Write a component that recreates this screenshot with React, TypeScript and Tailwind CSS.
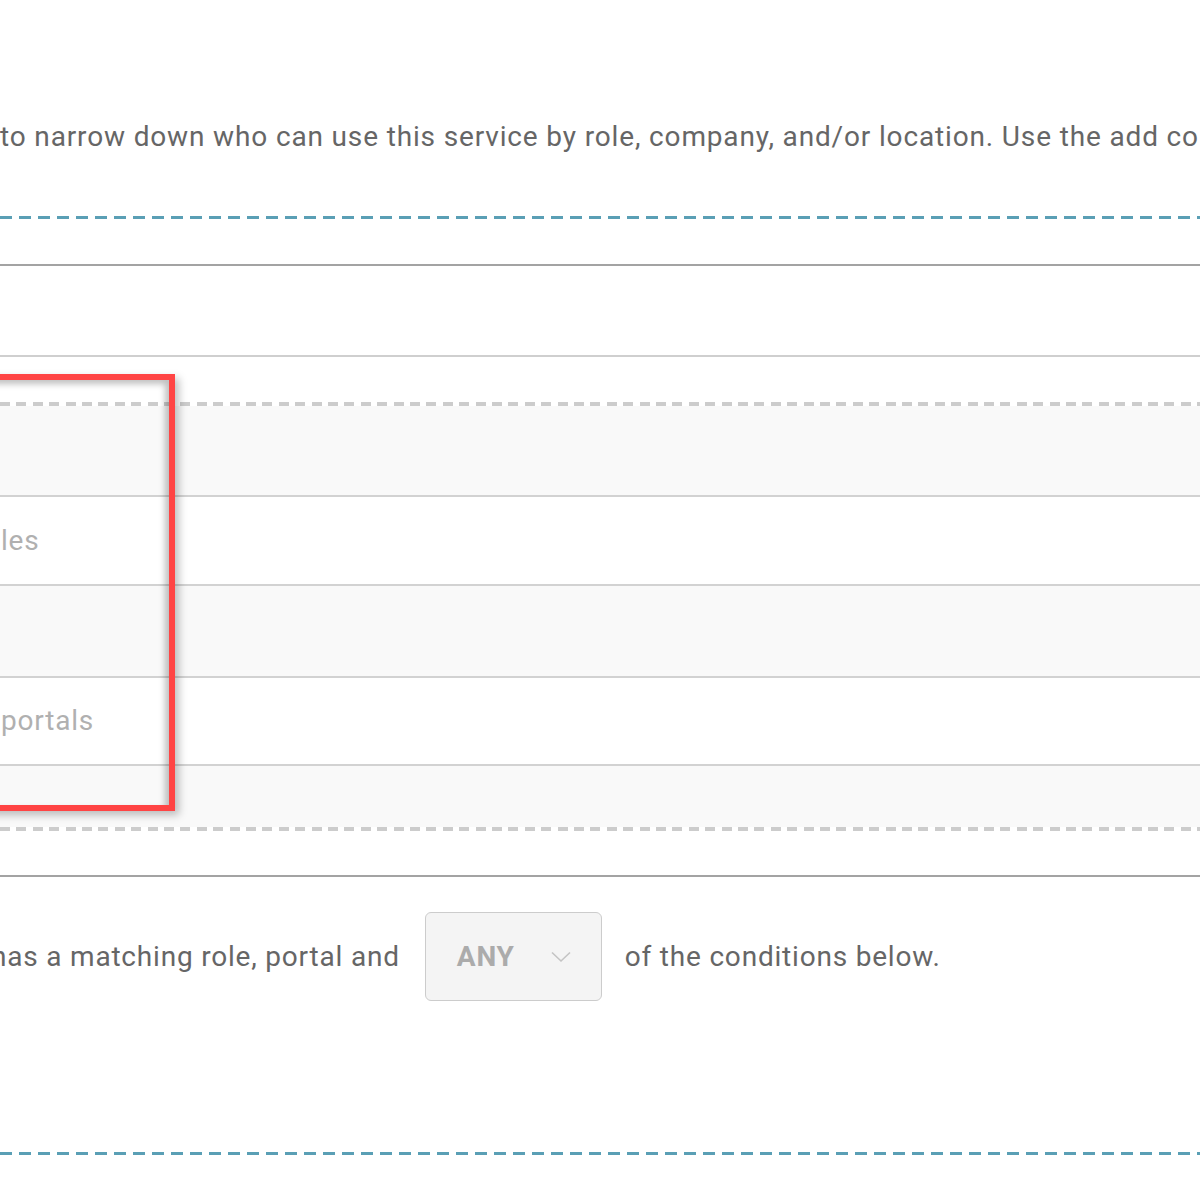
import React from "react"

const font = { fontFamily: "Roboto, 'Noto Sans', sans-serif" }

function TealDash() {
  return <div className="h-[3px] w-full bg-[repeating-linear-gradient(90deg,#5a9fb5_0_12px,transparent_12px_19px)]" />
}

function GrayDash() {
  return <div className="h-[4px] w-full bg-[repeating-linear-gradient(90deg,#cccccc_0_10px,transparent_10px_16.4px)]" />
}

function Row({ shaded, text, h }: { shaded?: boolean; text?: string; h: string }) {
  return (
    <div className={`${h} flex items-center ${shaded ? "bg-[#f9f9f9]" : "bg-white"}`}>
      {text && <span className="text-[28px] tracking-[0.8px] text-[#b0b0b0] pl-[1px]">{text}</span>}
    </div>
  )
}

export default function App() {
  return (
    <div className="relative w-[1200px] h-[1200px] overflow-hidden bg-white" style={font}>
      <div className="h-[216px] pt-[119px]">
        <p className="text-[28px] tracking-[0.85px] leading-[36px] text-[#666666] whitespace-nowrap">
          to narrow down who can use this service by role, company, and/or location. Use the add co
        </p>
      </div>
      <TealDash />
      <div className="h-[45px]" />
      <div className="h-[2px] bg-[#a3a3a3]" />
      <div className="h-[89px]" />
      <div className="h-[2px] bg-[#cfcfcf]" />
      <div className="h-[45px]" />
      <GrayDash />

      <div className="divide-y-2 divide-[#d2d2d2]">
        <Row shaded h="h-[91px]" />
        <Row h="h-[89px]" text="les" />
        <Row shaded h="h-[92px]" />
        <Row h="h-[88px]" text="portals" />
        <Row shaded h="h-[61px]" />
      </div>
      <GrayDash />

      <div className="h-[44px]" />
      <div className="h-[2px] bg-[#a3a3a3]" />
      <div className="h-[35px]" />
      <div className="flex items-center h-[89px] whitespace-nowrap text-[28px] tracking-[0.8px] text-[#666666]">
        <span className="-ml-[9px]">has a matching role, portal and</span>
        <div className="ml-[25px] w-[177px] h-[89px] rounded-[6px] border border-[#cccccc] bg-[#f4f4f4] flex items-center pl-[31px] pr-[30px] justify-between">
          <span className="font-bold text-[28px] tracking-[0.8px] text-[#ababab]">ANY</span>
          <svg width="20" height="12" viewBox="0 0 20 12" fill="none">
            <path d="M1 1.5 L10 10 L19 1.5" stroke="#c4c4c4" strokeWidth="1.6" />
          </svg>
        </div>
        <span className="ml-[23px]">of the conditions below.</span>
      </div>
      <div className="h-[151px]" />
      <TealDash />

      {/* red highlight overlay */}
      <div className="absolute left-[-20px] top-[374px] w-[195px] h-[437px] border-[6px] border-[#ff4444] shadow-[4px_4px_8px_rgba(0,0,0,0.25)] pointer-events-none">
        <div className="w-full h-full shadow-[inset_-4px_4px_6px_rgba(0,0,0,0.25)]" />
      </div>
    </div>
  )
}
